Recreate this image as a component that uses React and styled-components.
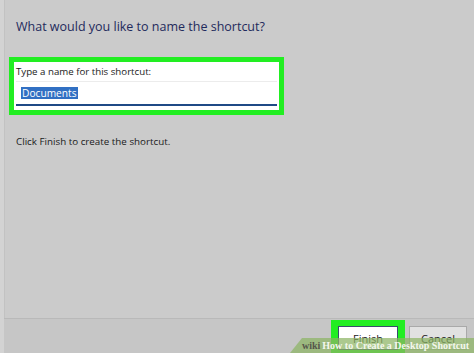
import React from 'react';
import styled, {createGlobalStyle} from 'styled-components';

const GlobalStyle = createGlobalStyle`
  html, body {
    margin: 0;
    padding: 0;
    background: #cbcbcb;
  }
`;

const Window = styled.div`
  position: relative;
  width: 474px;
  height: 353px;
  overflow: hidden;
  display: flex;
  flex-direction: column;
  background: #cbcbcb;
  font-family: "Open Sans", "Noto Sans", sans-serif;
  border-left: 4px solid #d3d3d3;
  box-sizing: border-box;
`;

const Main = styled.div`
  flex: 1;
  padding: 17px 0 0 4px;
  border-left: 1px solid #c2c2c2;
`;

const Title = styled.h1`
  margin: 0 0 20px 7px;
  font-size: 12.5px;
  line-height: 20px;
  font-weight: 400;
  color: #1f2a5c;
`;

const Highlight = styled.div`
  width: 261px;
  border: 5px solid #22ee22;
  background: #ffffff;
  padding: 1px 2px 4px;
`;

const Label = styled.div`
  font-size: 9.7px;
  line-height: 18px;
  color: #1a1a1a;
`;

const Field = styled.div`
  height: 22px;
  border-top: 1px solid #ececec;
  border-bottom: 2px solid #1f4a86;
  display: flex;
  align-items: center;
  padding-left: 5px;
`;

const Selected = styled.span`
  background: #3170c3;
  color: #ffffff;
  font-size: 10.2px;
  line-height: 12px;
  padding: 0 1px;
`;

const Hint = styled.p`
  margin: 19px 0 0 7px;
  font-size: 9.8px;
  line-height: 16px;
  color: #1a1a1a;
`;

const Footer = styled.div`
  height: 34px;
  border-top: 1px solid #b9b9b9;
  background: #c6c6c6;
  display: flex;
  justify-content: flex-end;
  align-items: flex-start;
  padding-right: 7px;
`;

const FocusRing = styled.div`
  margin-top: 1px;
  padding: 6px 7px 0;
  height: 40px;
  background: #22ee22;
`;

const Button = styled.button`
  width: ${p => p.$w}px;
  height: 24px;
  margin: ${p => p.$m || 0};
  background: ${p => (p.$primary ? '#ffffff' : '#e1e1e1')};
  border: 1px solid ${p => (p.$primary ? '#3a4d6e' : '#a9a9a9')};
  font-family: "Open Sans", "Noto Sans", sans-serif;
  font-size: 11px;
  color: #1a1a1a;
  padding: 1px 0 0;
`;

const Watermark = styled.div`
  position: absolute;
  right: 0;
  bottom: 0;
  width: 184px;
  height: 15px;
  background: rgba(140, 180, 100, 0.72);
  clip-path: polygon(12px 0, 100% 0, 100% 100%, 0 100%);
  display: flex;
  align-items: center;
  padding-left: 12px;
  box-sizing: border-box;
  font-family: "Liberation Serif", "DejaVu Serif", serif;
  font-weight: 700;
  font-size: 10px;
  white-space: nowrap;
`;

const Wiki = styled.span`
  color: #55554a;
  margin-right: 2px;
`;

const Caption = styled.span`
  color: #f4f7ee;
`;

export default function App() {
  return (
    <>
      <GlobalStyle />
      <Window>
        <Main>
          <Title>What would you like to name the shortcut?</Title>
          <Highlight>
            <Label>Type a name for this shortcut:</Label>
            <Field>
              <Selected>Documents</Selected>
            </Field>
          </Highlight>
          <Hint>Click Finish to create the shortcut.</Hint>
        </Main>
        <Footer>
          <FocusRing>
            <Button $w={60} $primary>Finish</Button>
          </FocusRing>
          <Button $w={58} $m="7px 0 0 4px">Cancel</Button>
        </Footer>
        <Watermark>
          <Wiki>wiki</Wiki>
          <Caption>How to Create a Desktop Shortcut</Caption>
        </Watermark>
      </Window>
    </>
  );
}
